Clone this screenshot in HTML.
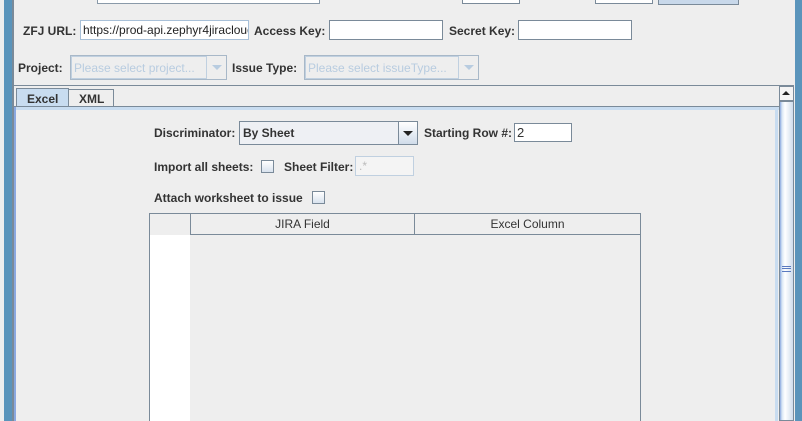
<!DOCTYPE html>
<html><head><style>
*{box-sizing:border-box;margin:0;padding:0}
html,body{width:802px;height:421px;overflow:hidden}
body{background:#eeeeee;position:relative;font-family:"Liberation Sans",sans-serif;font-size:12px;color:#333}
.a{position:absolute}
.l{position:absolute;font-weight:bold;color:#333;font-size:12px;line-height:14px}
.f{position:absolute;background:#fff;border:1px solid #7a8a99}
.cb{position:absolute;width:13px;height:13px;border:1px solid #7a8a99;background:linear-gradient(#fff,#d8e2ee)}
</style></head><body>
<div class="a" style="left:4px;top:0;width:8px;height:421px;background:#5a94bb"></div>
<div class="a" style="left:12px;top:0;width:2px;height:421px;background:#7a8a99"></div>
<div class="a" style="left:795px;top:0;width:7px;height:421px;background:#5a94bb"></div>

<div class="f" style="left:97px;top:-2px;width:223px;height:6px;border-color:#8a9aa9"></div>
<div class="f" style="left:462px;top:-2px;width:58px;height:6px"></div>
<div class="f" style="left:595px;top:-2px;width:58px;height:6px"></div>
<div class="a" style="left:658px;top:-2px;width:81px;height:7px;border:1px solid #7a8a99;background:#c8d8ea"></div>

<div class="l" style="left:23px;top:24px">ZFJ URL:</div>
<div class="f" style="left:80px;top:20px;width:169px;height:20px;border-color:#a8c0d8;font-weight:normal;padding:2px 0 0 2px;overflow:hidden;white-space:nowrap;color:#222">https://prod-api.zephyr4jiracloud</div>
<div class="l" style="left:254px;top:24px">Access Key:</div>
<div class="f" style="left:329px;top:20px;width:114px;height:20px"></div>
<div class="l" style="left:449px;top:24px">Secret Key:</div>
<div class="f" style="left:518px;top:20px;width:114px;height:20px"></div>

<div class="l" style="left:18px;top:61px">Project:</div>
<div class="a" style="left:70px;top:55px;width:157px;height:25px;border:1px solid #a8b8c8;background:#eee"></div>
<div class="a" style="left:71px;top:56px;width:136px;height:23px;border:1px solid #c0d0e0;color:#b8cce0;padding:4px 0 0 2px;white-space:nowrap;overflow:hidden">Please select project...</div>
<div class="a" style="left:212px;top:65px;border-left:5px solid transparent;border-right:5px solid transparent;border-top:5px solid #b8cce0"></div>
<div class="l" style="left:232px;top:61px">Issue Type:</div>
<div class="a" style="left:304px;top:55px;width:175px;height:25px;border:1px solid #a8b8c8;background:#eee"></div>
<div class="a" style="left:305px;top:56px;width:154px;height:23px;border:1px solid #c0d0e0;color:#b8cce0;padding:4px 0 0 2px;white-space:nowrap;overflow:hidden">Please select issueType...</div>
<div class="a" style="left:464px;top:65px;border-left:5px solid transparent;border-right:5px solid transparent;border-top:5px solid #b8cce0"></div>

<div class="a" style="left:13px;top:85px;width:781px;height:1px;background:#7a8a99"></div>
<div class="a" style="left:16px;top:88px;width:53px;height:21px;border:1px solid #7a8a99;border-bottom:none;background:#c8dcf0;font-weight:bold;padding:3px 0 0 10px">Excel</div>
<div class="a" style="left:69px;top:89px;width:45px;height:18px;border:1px solid #7a8a99;border-left:none;border-bottom:none;font-weight:bold;padding:2px 0 0 10px">XML</div>
<div class="a" style="left:14px;top:106px;width:765px;height:1px;background:#7a8a99"></div>
<div class="a" style="left:14px;top:107px;width:765px;height:3px;background:#c8dcf0"></div>
<div class="a" style="left:14px;top:107px;width:2px;height:314px;background:#8aa8e0"></div>
<div class="a" style="left:775px;top:107px;width:3px;height:314px;background:#c8dcf0"></div>

<div class="a" style="left:779px;top:86px;width:15px;height:15px;border:1px solid #7a8a99;background:#f4f4f4"></div>
<div class="a" style="left:782px;top:91px;border-left:4px solid transparent;border-right:4px solid transparent;border-bottom:4px solid #222"></div>
<div class="a" style="left:779px;top:101px;width:15px;height:320px;border:1px solid #7a8a99;background:linear-gradient(90deg,#8aa8e0 0,#d8e6f4 2px,#fff 5px,#c8d8ea 14px)"></div>
<div class="a" style="left:782px;top:266px;width:9px;height:6px;border-top:1px solid #5a7ac0;border-bottom:1px solid #5a7ac0"></div>
<div class="a" style="left:782px;top:268px;width:9px;height:1px;background:#5a7ac0"></div>

<div class="l" style="left:154px;top:126px">Discriminator:</div>
<div class="a" style="left:239px;top:121px;width:179px;height:24px;border:1px solid #7a8a99;background:#eef0f4;font-weight:bold;padding:4px 0 0 3px">By Sheet</div>
<div class="a" style="left:398px;top:122px;width:19px;height:22px;border-left:1px solid #7a8a99;background:linear-gradient(#fff,#d0dcea)"></div>
<div class="a" style="left:403px;top:131px;border-left:5px solid transparent;border-right:5px solid transparent;border-top:5px solid #222"></div>
<div class="l" style="left:424px;top:126px">Starting Row #:</div>
<div class="f" style="left:514px;top:123px;width:58px;height:19px;padding:1px 0 0 2px;font-size:13px">2</div>

<div class="l" style="left:154px;top:160px">Import all sheets:</div>
<div class="cb" style="left:261px;top:160px"></div>
<div class="l" style="left:284px;top:160px">Sheet Filter:</div>
<div class="a" style="left:355px;top:156px;width:59px;height:20px;border:1px solid #c0d0e0;background:#f4f4f4;color:#bbb;padding:2px 0 0 3px">.*</div>

<div class="l" style="left:154px;top:191px">Attach worksheet to issue</div>
<div class="cb" style="left:312px;top:191px"></div>

<div class="a" style="left:149px;top:213px;width:492px;height:208px;border:1px solid #7a8a99;border-bottom:none"></div>
<div class="a" style="left:190px;top:214px;width:225px;height:21px;border-left:1px solid #7a8a99;border-right:1px solid #7a8a99;border-bottom:1px solid #7a8a99;text-align:center;padding-top:3px;font-size:12px">JIRA Field</div>
<div class="a" style="left:415px;top:214px;width:225px;height:21px;border-bottom:1px solid #7a8a99;text-align:center;padding-top:3px;font-size:12px">Excel Column</div>
<div class="a" style="left:150px;top:235px;width:40px;height:186px;background:#fff"></div>
</body></html>
